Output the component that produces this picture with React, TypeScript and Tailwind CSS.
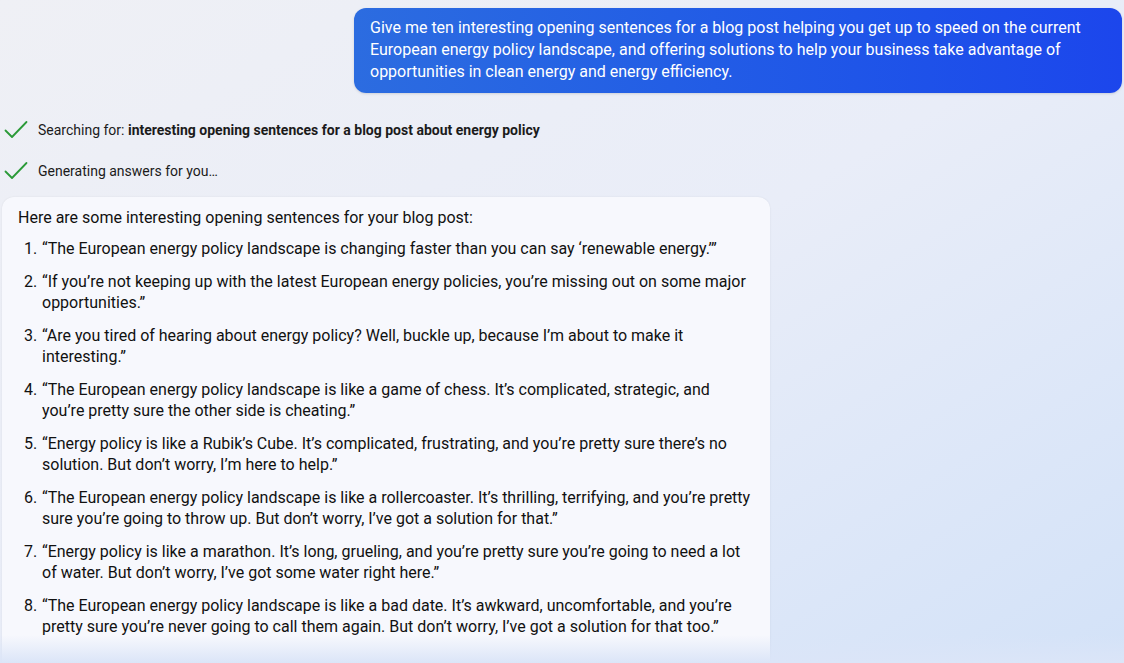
const items = [
  '“The European energy policy landscape is changing faster than you can say ‘renewable energy.’”',
  '“If you’re not keeping up with the latest European energy policies, you’re missing out on some major opportunities.”',
  '“Are you tired of hearing about energy policy? Well, buckle up, because I’m about to make it interesting.”',
  '“The European energy policy landscape is like a game of chess. It’s complicated, strategic, and you’re pretty sure the other side is cheating.”',
  '“Energy policy is like a Rubik’s Cube. It’s complicated, frustrating, and you’re pretty sure there’s no solution. But don’t worry, I’m here to help.”',
  '“The European energy policy landscape is like a rollercoaster. It’s thrilling, terrifying, and you’re pretty sure you’re going to throw up. But don’t worry, I’ve got a solution for that.”',
  '“Energy policy is like a marathon. It’s long, grueling, and you’re pretty sure you’re going to need a lot of water. But don’t worry, I’ve got some water right here.”',
  '“The European energy policy landscape is like a bad date. It’s awkward, uncomfortable, and you’re pretty sure you’re never going to call them again. But don’t worry, I’ve got a solution for that too.”',
];

function Check() {
  return (
    <svg width="24" height="20" viewBox="0 0 24 20" fill="none" className="shrink-0">
      <path d="M1.5 10.5 L8 17 L22.5 2" stroke="#2b9a38" strokeWidth="1.8" strokeLinecap="round" strokeLinejoin="round" />
    </svg>
  );
}

export default function App() {
  return (
    <div
      className="relative h-[663px] w-[1124px] overflow-hidden bg-gradient-to-br from-[#eff0f5] via-[#e9edf8] to-[#d3e2f8] text-[#111]"
      style={{ fontFamily: 'Roboto, "Liberation Sans", sans-serif' }}
    >
      {/* user prompt */}
      <div className="flex justify-end pt-[8px] pr-[2px]">
        <div className="w-[768px] rounded-xl bg-gradient-to-r from-[#2c6ce0] to-[#1c46ec] px-4 pt-[9px] pb-[10px] text-[16px] leading-[22px] text-white shadow-sm">
          Give me ten interesting opening sentences for a blog post helping you get up to speed on the current
          European energy policy landscape, and offering solutions to help your business take advantage of
          opportunities in clean energy and energy efficiency.
        </div>
      </div>

      {/* progress */}
      <div className="mt-[27px] flex flex-col gap-[21px] pl-[4px] text-[14px] leading-[20px] text-[#1b1b1b]">
        <div className="flex items-center gap-[10px]">
          <Check />
          <span>
            Searching for: <b className="font-bold">interesting opening sentences for a blog post about energy policy</b>
          </span>
        </div>
        <div className="flex items-center gap-[10px]">
          <Check />
          <span>Generating answers for you…</span>
        </div>
      </div>

      {/* answer */}
      <div className="ml-[2px] mt-[16px] w-[768px] rounded-xl bg-[#f7f8fd] px-4 pt-[10px] pb-10 text-[16px] leading-[21.5px] text-[#111] shadow-[0_0_2px_rgba(0,0,0,0.08)]">
        <p className="pb-[9.5px]">Here are some interesting opening sentences for your blog post:</p>
        <ol className="flex flex-col gap-[11px] pl-[6px]">
          {items.map((t, i) => (
            <li key={i} className="flex">
              <span className="w-[18px] shrink-0">{i + 1}.</span>
              <span>{t}</span>
            </li>
          ))}
        </ol>
      </div>

      {/* bottom fade */}
      <div className="pointer-events-none absolute bottom-0 left-0 h-[28px] w-full bg-gradient-to-b from-transparent to-[#dbe5f8]" />
    </div>
  );
}
